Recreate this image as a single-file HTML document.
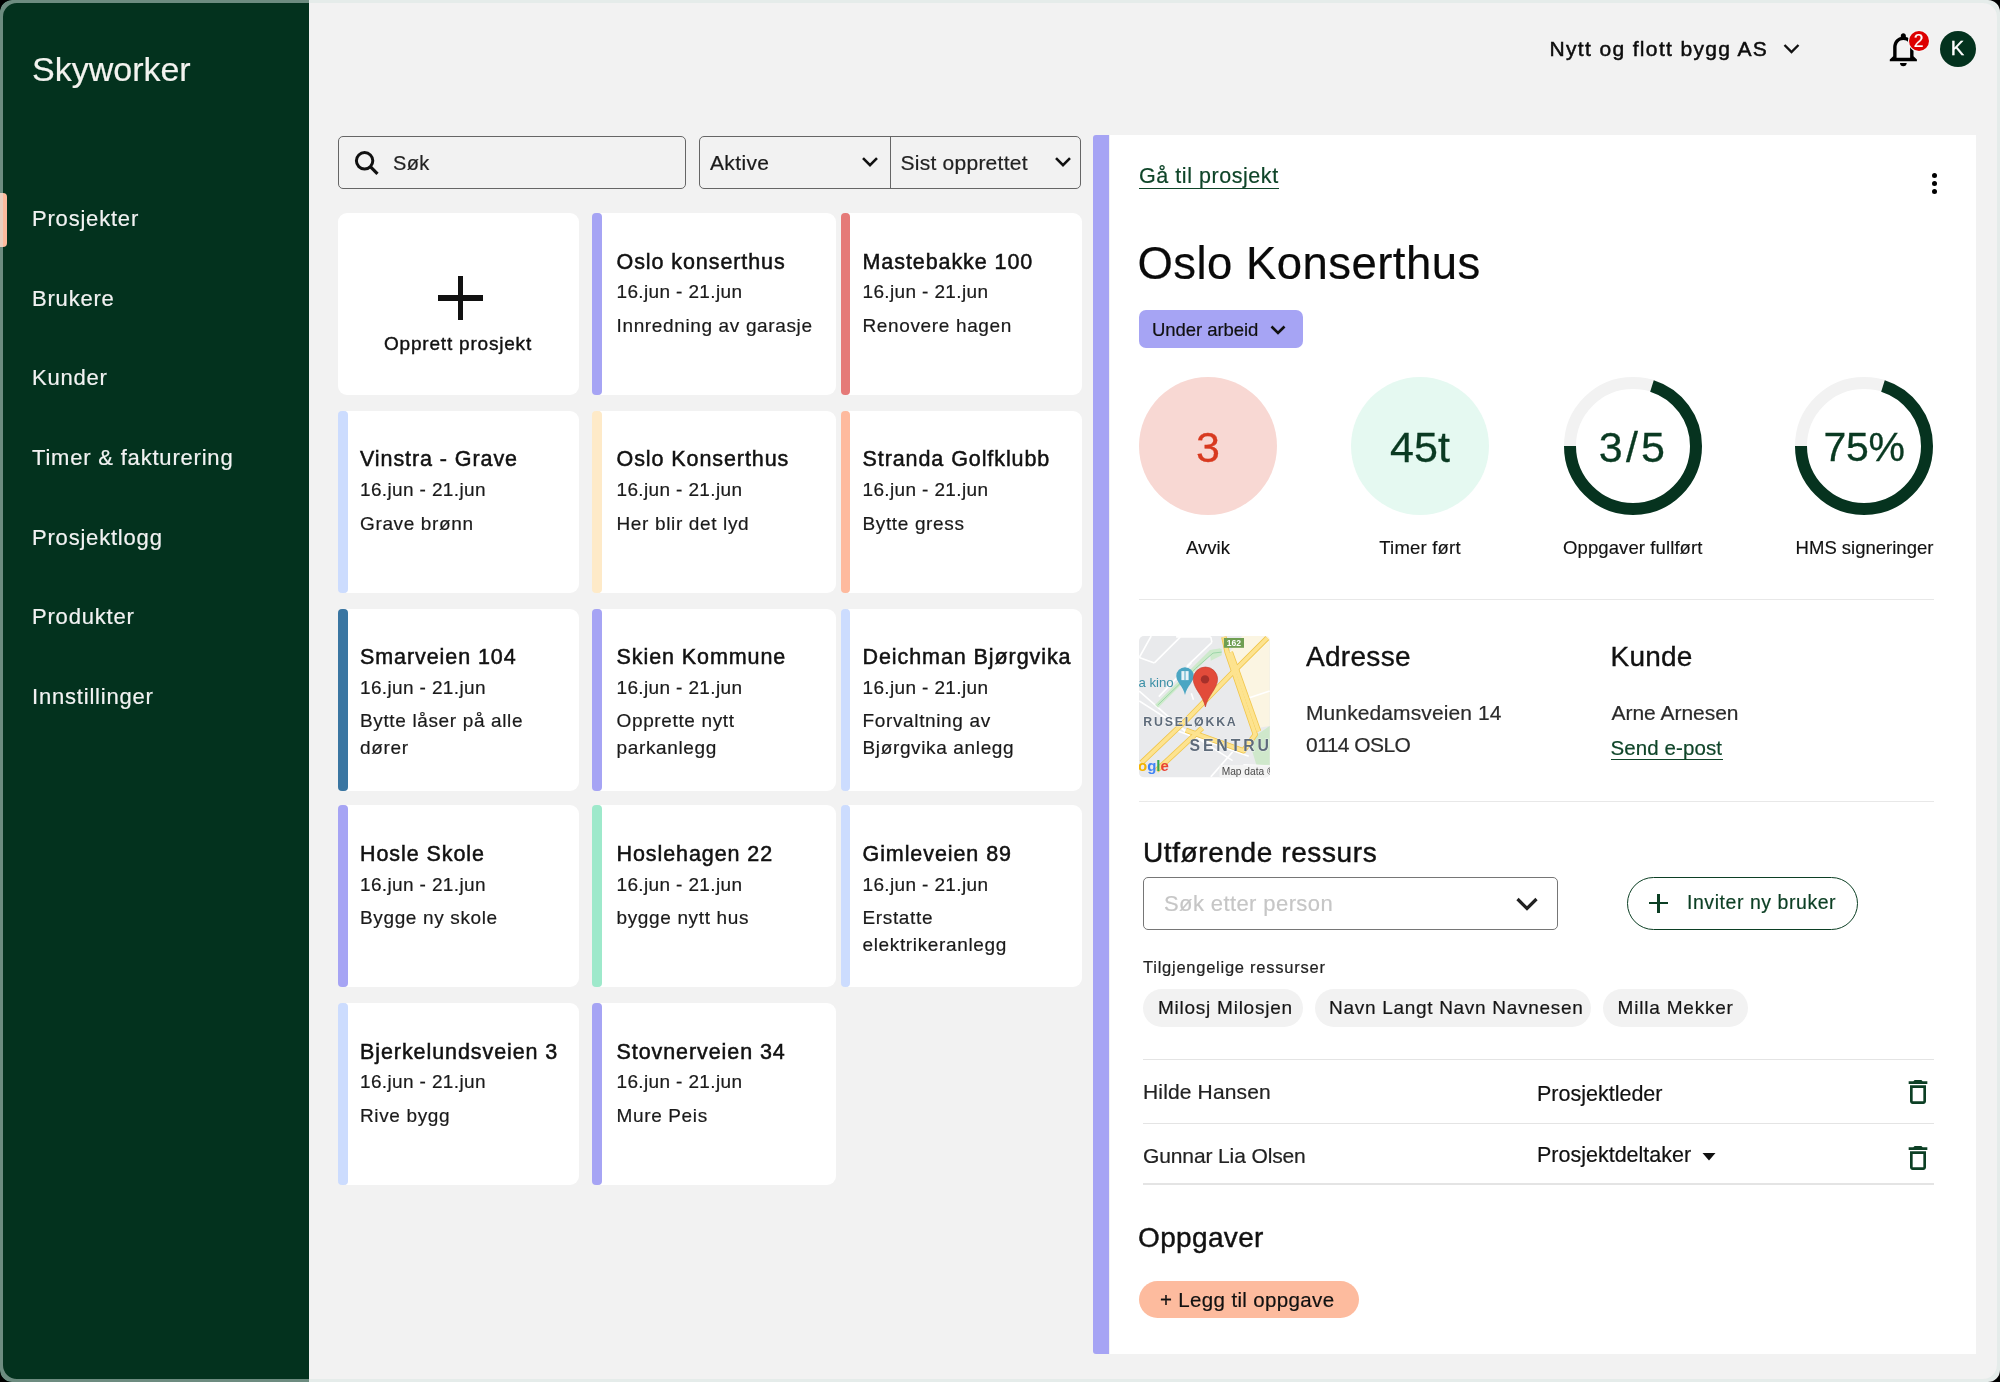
<!DOCTYPE html><html><head><meta charset="utf-8"><style>
*{margin:0;padding:0;box-sizing:border-box}
html,body{width:2000px;height:1382px;overflow:hidden;background:#000}
body{font-family:"Liberation Sans",sans-serif;position:relative}
.t{position:absolute;white-space:nowrap}
.r{position:absolute}
svg{position:absolute;overflow:visible}
#app{position:absolute;left:0;top:0;width:2000px;height:1382px;background:#f2f2f2;overflow:hidden;will-change:transform}
</style></head><body><div id="app">
<div class="r" style="left:0px;top:0px;width:309px;height:1382px;background:#03321e;"></div>
<div class="t " style="left:32.00px;top:48.01px;font-size:34px;line-height:42px;color:#f3f3ef;font-weight:400;letter-spacing:0px;-webkit-text-stroke:0.2px #f3f3ef;">Skyworker</div>
<div class="t " style="left:32.00px;top:205.07px;font-size:22px;line-height:28px;color:#f2f2f2;font-weight:400;letter-spacing:0.8px;-webkit-text-stroke:0.2px #f2f2f2;">Prosjekter</div>
<div class="t " style="left:32.00px;top:284.72px;font-size:22px;line-height:28px;color:#f2f2f2;font-weight:400;letter-spacing:0.8px;-webkit-text-stroke:0.2px #f2f2f2;">Brukere</div>
<div class="t " style="left:32.00px;top:364.37px;font-size:22px;line-height:28px;color:#f2f2f2;font-weight:400;letter-spacing:0.8px;-webkit-text-stroke:0.2px #f2f2f2;">Kunder</div>
<div class="t " style="left:32.00px;top:444.02px;font-size:22px;line-height:28px;color:#f2f2f2;font-weight:400;letter-spacing:0.8px;-webkit-text-stroke:0.2px #f2f2f2;">Timer &amp; fakturering</div>
<div class="t " style="left:32.00px;top:523.67px;font-size:22px;line-height:28px;color:#f2f2f2;font-weight:400;letter-spacing:0.8px;-webkit-text-stroke:0.2px #f2f2f2;">Prosjektlogg</div>
<div class="t " style="left:32.00px;top:603.32px;font-size:22px;line-height:28px;color:#f2f2f2;font-weight:400;letter-spacing:0.8px;-webkit-text-stroke:0.2px #f2f2f2;">Produkter</div>
<div class="t " style="left:32.00px;top:682.97px;font-size:22px;line-height:28px;color:#f2f2f2;font-weight:400;letter-spacing:0.8px;-webkit-text-stroke:0.2px #f2f2f2;">Innstillinger</div>
<div class="r" style="left:0px;top:193px;width:7px;height:54px;background:#fdbb9e;border-radius:0 4px 4px 0;"></div>
<div class="t " style="left:1549.50px;top:36.12px;font-size:21px;line-height:26px;color:#0c0c0c;font-weight:400;letter-spacing:1.35px;-webkit-text-stroke:0.5px #0c0c0c;">Nytt og flott bygg AS</div>
<svg style="left:1780px;top:40px" width="24" height="18" viewBox="0 0 24 18"><polyline points="4.5,5 11.5,12 18.5,5" fill="none" stroke="#111" stroke-width="2.4" stroke-linecap="butt"/></svg>
<svg style="left:1883.2px;top:28.86px" width="40.7" height="40.7" viewBox="0 0 24 24"><path fill="#000" d="M12 22c1.1 0 2-.9 2-2h-4c0 1.1.89 2 2 2zm6-6v-5c0-3.07-1.64-5.64-4.5-6.32V4c0-.83-.67-1.5-1.5-1.5s-1.5.67-1.5 1.5v.68C7.63 5.36 6 7.92 6 11v5l-2 2v1h16v-1l-2-2zm-2 1H8v-6c0-2.48 1.51-4.5 4-4.5s4 2.02 4 4.5v6z"/></svg>
<div class="r" style="left:1908.9px;top:30.7px;width:20px;height:20px;border-radius:50%;background:#dd0000;box-shadow:0 0 0 1px #f4f8f8"></div>
<div class="t " style="left:1913.80px;top:29.83px;font-size:17.5px;line-height:22px;color:#fff;font-weight:400;letter-spacing:0px;-webkit-text-stroke:0.2px #fff;">2</div>
<div class="r" style="left:1939.5px;top:31px;width:36px;height:36px;border-radius:50%;background:#03321e"></div>
<div class="t " style="left:1950.80px;top:35.57px;font-size:20px;line-height:25px;color:#fff;font-weight:400;letter-spacing:0px;-webkit-text-stroke:0.35px #fff;">K</div>
<div class="r" style="left:338.3px;top:136.1px;width:347.9px;height:53px;border:1.8px solid #666;border-radius:5px"></div>
<svg style="left:350px;top:148px" width="32" height="32" viewBox="0 0 32 32"><circle cx="14.6" cy="12.8" r="8.2" fill="none" stroke="#111" stroke-width="3"/><line x1="20.6" y1="18.8" x2="27.5" y2="25.8" stroke="#111" stroke-width="3.2"/></svg>
<div class="t " style="left:393.00px;top:150.87px;font-size:20px;line-height:25px;color:#222;font-weight:400;letter-spacing:0.4px;-webkit-text-stroke:0.2px #222;">Søk</div>
<div class="r" style="left:699.4px;top:135.8px;width:382px;height:52.8px;border:1.8px solid #666;border-radius:5px"></div>
<div class="r" style="left:889.7px;top:136.5px;width:1.7px;height:51.5px;background:#666;"></div>
<svg style="left:858.4px;top:150px" width="24" height="24" viewBox="0 0 24 24"><polyline points="5,8.2 12,15.2 19,8.2" fill="none" stroke="#111" stroke-width="2.6"/></svg>
<svg style="left:1050.6px;top:150px" width="24" height="24" viewBox="0 0 24 24"><polyline points="5,8.2 12,15.2 19,8.2" fill="none" stroke="#111" stroke-width="2.6"/></svg>
<div class="t " style="left:710.00px;top:149.52px;font-size:21px;line-height:26px;color:#1a1a1a;font-weight:400;letter-spacing:0.35px;-webkit-text-stroke:0.2px #1a1a1a;">Aktive</div>
<div class="t " style="left:900.50px;top:149.52px;font-size:21px;line-height:26px;color:#222;font-weight:400;letter-spacing:0.25px;-webkit-text-stroke:0.2px #222;">Sist opprettet</div>
<div class="r" style="left:338.3px;top:213.0px;width:240.7px;height:182px;background:#fff;border-radius:9px"></div>
<div class="r" style="left:438.4px;top:295.2px;width:44.5px;height:5.6px;background:#111;"></div>
<div class="r" style="left:457.9px;top:275.9px;width:5.6px;height:44.2px;background:#111;"></div>
<div class="t " style="left:384.00px;top:332.21px;font-size:19px;line-height:24px;color:#111;font-weight:400;letter-spacing:0.8px;-webkit-text-stroke:0.4px #111;">Opprett prosjekt</div>
<div class="r" style="left:600.2px;top:213.0px;width:235.8px;height:182px;background:#fff;border-radius:0 9px 9px 0"></div>
<div class="r" style="left:592.0px;top:213.0px;width:10.2px;height:182px;background:#a6a4f4;border-radius:4px"></div>
<div class="t " style="left:616.50px;top:248.55px;font-size:21.5px;line-height:27px;color:#111;font-weight:400;letter-spacing:0.92px;-webkit-text-stroke:0.5px #111;">Oslo konserthus</div>
<div class="t " style="left:616.50px;top:280.41px;font-size:19px;line-height:24px;color:#1a1a1a;font-weight:400;letter-spacing:0.36px;-webkit-text-stroke:0.2px #1a1a1a;">16.jun - 21.jun</div>
<div class="t " style="left:616.50px;top:313.71px;font-size:19px;line-height:24px;color:#1a1a1a;font-weight:400;letter-spacing:0.64px;-webkit-text-stroke:0.2px #1a1a1a;">Innredning av garasje</div>
<div class="r" style="left:848.1px;top:213.0px;width:233.5px;height:182px;background:#fff;border-radius:0 9px 9px 0"></div>
<div class="r" style="left:840.9px;top:213.0px;width:9.2px;height:182px;background:#e57a78;border-radius:4px"></div>
<div class="t " style="left:862.50px;top:248.55px;font-size:21.5px;line-height:27px;color:#111;font-weight:400;letter-spacing:0.92px;-webkit-text-stroke:0.5px #111;">Mastebakke 100</div>
<div class="t " style="left:862.50px;top:280.41px;font-size:19px;line-height:24px;color:#1a1a1a;font-weight:400;letter-spacing:0.36px;-webkit-text-stroke:0.2px #1a1a1a;">16.jun - 21.jun</div>
<div class="t " style="left:862.50px;top:313.71px;font-size:19px;line-height:24px;color:#1a1a1a;font-weight:400;letter-spacing:0.64px;-webkit-text-stroke:0.2px #1a1a1a;">Renovere hagen</div>
<div class="r" style="left:346.3px;top:410.9px;width:232.7px;height:182px;background:#fff;border-radius:0 9px 9px 0"></div>
<div class="r" style="left:338.3px;top:410.9px;width:10px;height:182px;background:#ccdcfe;border-radius:4px"></div>
<div class="t " style="left:360.00px;top:446.45px;font-size:21.5px;line-height:27px;color:#111;font-weight:400;letter-spacing:0.92px;-webkit-text-stroke:0.5px #111;">Vinstra - Grave</div>
<div class="t " style="left:360.00px;top:478.31px;font-size:19px;line-height:24px;color:#1a1a1a;font-weight:400;letter-spacing:0.36px;-webkit-text-stroke:0.2px #1a1a1a;">16.jun - 21.jun</div>
<div class="t " style="left:360.00px;top:511.61px;font-size:19px;line-height:24px;color:#1a1a1a;font-weight:400;letter-spacing:0.64px;-webkit-text-stroke:0.2px #1a1a1a;">Grave brønn</div>
<div class="r" style="left:600.2px;top:410.9px;width:235.8px;height:182px;background:#fff;border-radius:0 9px 9px 0"></div>
<div class="r" style="left:592.0px;top:410.9px;width:10.2px;height:182px;background:#feeac8;border-radius:4px"></div>
<div class="t " style="left:616.50px;top:446.45px;font-size:21.5px;line-height:27px;color:#111;font-weight:400;letter-spacing:0.92px;-webkit-text-stroke:0.5px #111;">Oslo Konserthus</div>
<div class="t " style="left:616.50px;top:478.31px;font-size:19px;line-height:24px;color:#1a1a1a;font-weight:400;letter-spacing:0.36px;-webkit-text-stroke:0.2px #1a1a1a;">16.jun - 21.jun</div>
<div class="t " style="left:616.50px;top:511.61px;font-size:19px;line-height:24px;color:#1a1a1a;font-weight:400;letter-spacing:0.64px;-webkit-text-stroke:0.2px #1a1a1a;">Her blir det lyd</div>
<div class="r" style="left:848.1px;top:410.9px;width:233.5px;height:182px;background:#fff;border-radius:0 9px 9px 0"></div>
<div class="r" style="left:840.9px;top:410.9px;width:9.2px;height:182px;background:#feba9e;border-radius:4px"></div>
<div class="t " style="left:862.50px;top:446.45px;font-size:21.5px;line-height:27px;color:#111;font-weight:400;letter-spacing:0.92px;-webkit-text-stroke:0.5px #111;">Stranda Golfklubb</div>
<div class="t " style="left:862.50px;top:478.31px;font-size:19px;line-height:24px;color:#1a1a1a;font-weight:400;letter-spacing:0.36px;-webkit-text-stroke:0.2px #1a1a1a;">16.jun - 21.jun</div>
<div class="t " style="left:862.50px;top:511.61px;font-size:19px;line-height:24px;color:#1a1a1a;font-weight:400;letter-spacing:0.64px;-webkit-text-stroke:0.2px #1a1a1a;">Bytte gress</div>
<div class="r" style="left:346.3px;top:608.5px;width:232.7px;height:182px;background:#fff;border-radius:0 9px 9px 0"></div>
<div class="r" style="left:338.3px;top:608.5px;width:10px;height:182px;background:#3a76a2;border-radius:4px"></div>
<div class="t " style="left:360.00px;top:644.05px;font-size:21.5px;line-height:27px;color:#111;font-weight:400;letter-spacing:0.92px;-webkit-text-stroke:0.5px #111;">Smarveien 104</div>
<div class="t " style="left:360.00px;top:675.91px;font-size:19px;line-height:24px;color:#1a1a1a;font-weight:400;letter-spacing:0.36px;-webkit-text-stroke:0.2px #1a1a1a;">16.jun - 21.jun</div>
<div class="t " style="left:360.00px;top:709.21px;font-size:19px;line-height:24px;color:#1a1a1a;font-weight:400;letter-spacing:0.64px;-webkit-text-stroke:0.2px #1a1a1a;">Bytte låser på alle</div>
<div class="t " style="left:360.00px;top:735.81px;font-size:19px;line-height:24px;color:#1a1a1a;font-weight:400;letter-spacing:0.64px;-webkit-text-stroke:0.2px #1a1a1a;">dører</div>
<div class="r" style="left:600.2px;top:608.5px;width:235.8px;height:182px;background:#fff;border-radius:0 9px 9px 0"></div>
<div class="r" style="left:592.0px;top:608.5px;width:10.2px;height:182px;background:#a6a4f4;border-radius:4px"></div>
<div class="t " style="left:616.50px;top:644.05px;font-size:21.5px;line-height:27px;color:#111;font-weight:400;letter-spacing:0.92px;-webkit-text-stroke:0.5px #111;">Skien Kommune</div>
<div class="t " style="left:616.50px;top:675.91px;font-size:19px;line-height:24px;color:#1a1a1a;font-weight:400;letter-spacing:0.36px;-webkit-text-stroke:0.2px #1a1a1a;">16.jun - 21.jun</div>
<div class="t " style="left:616.50px;top:709.21px;font-size:19px;line-height:24px;color:#1a1a1a;font-weight:400;letter-spacing:0.64px;-webkit-text-stroke:0.2px #1a1a1a;">Opprette nytt</div>
<div class="t " style="left:616.50px;top:735.81px;font-size:19px;line-height:24px;color:#1a1a1a;font-weight:400;letter-spacing:0.64px;-webkit-text-stroke:0.2px #1a1a1a;">parkanlegg</div>
<div class="r" style="left:848.1px;top:608.5px;width:233.5px;height:182px;background:#fff;border-radius:0 9px 9px 0"></div>
<div class="r" style="left:840.9px;top:608.5px;width:9.2px;height:182px;background:#ccdcfe;border-radius:4px"></div>
<div class="t " style="left:862.50px;top:644.05px;font-size:21.5px;line-height:27px;color:#111;font-weight:400;letter-spacing:0.92px;-webkit-text-stroke:0.5px #111;">Deichman Bjørgvika</div>
<div class="t " style="left:862.50px;top:675.91px;font-size:19px;line-height:24px;color:#1a1a1a;font-weight:400;letter-spacing:0.36px;-webkit-text-stroke:0.2px #1a1a1a;">16.jun - 21.jun</div>
<div class="t " style="left:862.50px;top:709.21px;font-size:19px;line-height:24px;color:#1a1a1a;font-weight:400;letter-spacing:0.64px;-webkit-text-stroke:0.2px #1a1a1a;">Forvaltning av</div>
<div class="t " style="left:862.50px;top:735.81px;font-size:19px;line-height:24px;color:#1a1a1a;font-weight:400;letter-spacing:0.64px;-webkit-text-stroke:0.2px #1a1a1a;">Bjørgvika anlegg</div>
<div class="r" style="left:346.3px;top:805.2px;width:232.7px;height:182px;background:#fff;border-radius:0 9px 9px 0"></div>
<div class="r" style="left:338.3px;top:805.2px;width:10px;height:182px;background:#a6a4f4;border-radius:4px"></div>
<div class="t " style="left:360.00px;top:840.75px;font-size:21.5px;line-height:27px;color:#111;font-weight:400;letter-spacing:0.92px;-webkit-text-stroke:0.5px #111;">Hosle Skole</div>
<div class="t " style="left:360.00px;top:872.61px;font-size:19px;line-height:24px;color:#1a1a1a;font-weight:400;letter-spacing:0.36px;-webkit-text-stroke:0.2px #1a1a1a;">16.jun - 21.jun</div>
<div class="t " style="left:360.00px;top:905.91px;font-size:19px;line-height:24px;color:#1a1a1a;font-weight:400;letter-spacing:0.64px;-webkit-text-stroke:0.2px #1a1a1a;">Bygge ny skole</div>
<div class="r" style="left:600.2px;top:805.2px;width:235.8px;height:182px;background:#fff;border-radius:0 9px 9px 0"></div>
<div class="r" style="left:592.0px;top:805.2px;width:10.2px;height:182px;background:#9ee9cb;border-radius:4px"></div>
<div class="t " style="left:616.50px;top:840.75px;font-size:21.5px;line-height:27px;color:#111;font-weight:400;letter-spacing:0.92px;-webkit-text-stroke:0.5px #111;">Hoslehagen 22</div>
<div class="t " style="left:616.50px;top:872.61px;font-size:19px;line-height:24px;color:#1a1a1a;font-weight:400;letter-spacing:0.36px;-webkit-text-stroke:0.2px #1a1a1a;">16.jun - 21.jun</div>
<div class="t " style="left:616.50px;top:905.91px;font-size:19px;line-height:24px;color:#1a1a1a;font-weight:400;letter-spacing:0.64px;-webkit-text-stroke:0.2px #1a1a1a;">bygge nytt hus</div>
<div class="r" style="left:848.1px;top:805.2px;width:233.5px;height:182px;background:#fff;border-radius:0 9px 9px 0"></div>
<div class="r" style="left:840.9px;top:805.2px;width:9.2px;height:182px;background:#ccdcfe;border-radius:4px"></div>
<div class="t " style="left:862.50px;top:840.75px;font-size:21.5px;line-height:27px;color:#111;font-weight:400;letter-spacing:0.92px;-webkit-text-stroke:0.5px #111;">Gimleveien 89</div>
<div class="t " style="left:862.50px;top:872.61px;font-size:19px;line-height:24px;color:#1a1a1a;font-weight:400;letter-spacing:0.36px;-webkit-text-stroke:0.2px #1a1a1a;">16.jun - 21.jun</div>
<div class="t " style="left:862.50px;top:905.91px;font-size:19px;line-height:24px;color:#1a1a1a;font-weight:400;letter-spacing:0.64px;-webkit-text-stroke:0.2px #1a1a1a;">Erstatte</div>
<div class="t " style="left:862.50px;top:932.51px;font-size:19px;line-height:24px;color:#1a1a1a;font-weight:400;letter-spacing:0.64px;-webkit-text-stroke:0.2px #1a1a1a;">elektrikeranlegg</div>
<div class="r" style="left:346.3px;top:1003.0px;width:232.7px;height:182px;background:#fff;border-radius:0 9px 9px 0"></div>
<div class="r" style="left:338.3px;top:1003.0px;width:10px;height:182px;background:#ccdcfe;border-radius:4px"></div>
<div class="t " style="left:360.00px;top:1038.55px;font-size:21.5px;line-height:27px;color:#111;font-weight:400;letter-spacing:0.92px;-webkit-text-stroke:0.5px #111;">Bjerkelundsveien 3</div>
<div class="t " style="left:360.00px;top:1070.41px;font-size:19px;line-height:24px;color:#1a1a1a;font-weight:400;letter-spacing:0.36px;-webkit-text-stroke:0.2px #1a1a1a;">16.jun - 21.jun</div>
<div class="t " style="left:360.00px;top:1103.71px;font-size:19px;line-height:24px;color:#1a1a1a;font-weight:400;letter-spacing:0.64px;-webkit-text-stroke:0.2px #1a1a1a;">Rive bygg</div>
<div class="r" style="left:600.2px;top:1003.0px;width:235.8px;height:182px;background:#fff;border-radius:0 9px 9px 0"></div>
<div class="r" style="left:592.0px;top:1003.0px;width:10.2px;height:182px;background:#a6a4f4;border-radius:4px"></div>
<div class="t " style="left:616.50px;top:1038.55px;font-size:21.5px;line-height:27px;color:#111;font-weight:400;letter-spacing:0.92px;-webkit-text-stroke:0.5px #111;">Stovnerveien 34</div>
<div class="t " style="left:616.50px;top:1070.41px;font-size:19px;line-height:24px;color:#1a1a1a;font-weight:400;letter-spacing:0.36px;-webkit-text-stroke:0.2px #1a1a1a;">16.jun - 21.jun</div>
<div class="t " style="left:616.50px;top:1103.71px;font-size:19px;line-height:24px;color:#1a1a1a;font-weight:400;letter-spacing:0.64px;-webkit-text-stroke:0.2px #1a1a1a;">Mure Peis</div>
<div class="r" style="left:1109.5px;top:135px;width:866.3px;height:1218.6px;background:#fff;"></div>
<div class="r" style="left:1093.4px;top:135px;width:16.1px;height:1218.6px;background:#a6a4f4;border-radius:3px 0 0 3px;"></div>
<div class="t " style="left:1139.00px;top:162.65px;font-size:21.5px;line-height:27px;color:#0f4529;font-weight:400;letter-spacing:0.55px;-webkit-text-stroke:0.2px #0f4529;">Gå til prosjekt</div>
<div class="r" style="left:1139px;top:187.5px;width:139.5px;height:1.4px;background:#0f4529;"></div>
<div class="r" style="left:1931.6px;top:172.60000000000002px;width:5.4px;height:5.4px;border-radius:50%;background:#000"></div>
<div class="r" style="left:1931.6px;top:180.70000000000002px;width:5.4px;height:5.4px;border-radius:50%;background:#000"></div>
<div class="r" style="left:1931.6px;top:188.70000000000002px;width:5.4px;height:5.4px;border-radius:50%;background:#000"></div>
<div class="t " style="left:1137.50px;top:235.33px;font-size:45.5px;line-height:57px;color:#0a0a0a;font-weight:400;letter-spacing:0.45px;-webkit-text-stroke:0.2px #0a0a0a;">Oslo Konserthus</div>
<div class="r" style="left:1139px;top:310.3px;width:164px;height:37.6px;border-radius:7px;background:#a6a4f4"></div>
<div class="t " style="left:1152.00px;top:317.59px;font-size:18.5px;line-height:23px;color:#111;font-weight:400;letter-spacing:-0.05px;-webkit-text-stroke:0.2px #111;">Under arbeid</div>
<svg style="left:1264px;top:317px" width="28" height="24" viewBox="0 0 28 24"><polyline points="7.5,9.5 14,16 20.5,9.5" fill="none" stroke="#111" stroke-width="2.6"/></svg>
<div class="r" style="left:1138.8px;top:377.0px;width:138px;height:138px;border-radius:50%;background:#f8d8d3"></div>
<div class="r" style="left:1350.8px;top:377.0px;width:138px;height:138px;border-radius:50%;background:#e5f9f1"></div>
<svg style="left:1562.8px;top:376px" width="140" height="140" viewBox="0 0 140 140"><circle cx="70" cy="70" r="63" fill="none" stroke="#f2f2f2" stroke-width="12"/><circle cx="70" cy="70" r="63" fill="none" stroke="#06331f" stroke-width="12" stroke-dasharray="277.09 395.84" transform="rotate(180 70 70) scale(1,-1) translate(0,-140)"/></svg>
<svg style="left:1793.9px;top:376px" width="140" height="140" viewBox="0 0 140 140"><circle cx="70" cy="70" r="63" fill="none" stroke="#f2f2f2" stroke-width="12"/><circle cx="70" cy="70" r="63" fill="none" stroke="#06331f" stroke-width="12" stroke-dasharray="277.09 395.84" transform="rotate(180 70 70) scale(1,-1) translate(0,-140)"/></svg>
<div class="t" style="left:1008px;width:400px;text-align:center;top:419.69px;font-size:43px;line-height:54px;color:#d8391f;letter-spacing:0px;font-weight:400;-webkit-text-stroke:0.3px #d8391f;">3</div>
<div class="t" style="left:1220px;width:400px;text-align:center;top:419.69px;font-size:43px;line-height:54px;color:#0a3a22;letter-spacing:0px;font-weight:400;-webkit-text-stroke:0.3px #0a3a22;">45t</div>
<div class="t" style="left:1433.5px;width:400px;text-align:center;top:419.69px;font-size:43px;line-height:54px;color:#0a3a22;letter-spacing:3.2px;font-weight:400;-webkit-text-stroke:0.3px #0a3a22;">3/5</div>
<div class="t" style="left:1664px;width:400px;text-align:center;top:421.89px;font-size:41px;line-height:51px;color:#0a3a22;letter-spacing:-0.3px;font-weight:400;-webkit-text-stroke:0.3px #0a3a22;">75%</div>
<div class="t" style="left:1008px;width:400px;text-align:center;top:535.69px;font-size:18.5px;line-height:23px;color:#111;letter-spacing:0px;font-weight:400;-webkit-text-stroke:0.15px #111;">Avvik</div>
<div class="t" style="left:1220px;width:400px;text-align:center;top:535.69px;font-size:18.5px;line-height:23px;color:#111;letter-spacing:0.2px;font-weight:400;-webkit-text-stroke:0.15px #111;">Timer ført</div>
<div class="t" style="left:1432.8px;width:400px;text-align:center;top:535.69px;font-size:18.5px;line-height:23px;color:#111;letter-spacing:0.1px;font-weight:400;-webkit-text-stroke:0.15px #111;">Oppgaver fullført</div>
<div class="t" style="left:1664.5px;width:400px;text-align:center;top:535.69px;font-size:18.5px;line-height:23px;color:#111;letter-spacing:0px;font-weight:400;-webkit-text-stroke:0.15px #111;">HMS signeringer</div>
<div class="r" style="left:1139px;top:598.6px;width:795px;height:1.6px;background:#e8e8e8;"></div>
<div class="t " style="left:1306.00px;top:638.79px;font-size:28px;line-height:35px;color:#111;font-weight:400;letter-spacing:0.3px;-webkit-text-stroke:0.35px #111;">Adresse</div>
<div class="t " style="left:1306.00px;top:700.12px;font-size:21px;line-height:26px;color:#2b2b2b;font-weight:400;letter-spacing:0.1px;-webkit-text-stroke:0.2px #2b2b2b;">Munkedamsveien 14</div>
<div class="t " style="left:1306.00px;top:732.32px;font-size:21px;line-height:26px;color:#2b2b2b;font-weight:400;letter-spacing:-0.55px;-webkit-text-stroke:0.2px #2b2b2b;">0114 OSLO</div>
<div class="t " style="left:1610.50px;top:638.79px;font-size:28px;line-height:35px;color:#111;font-weight:400;letter-spacing:0.2px;-webkit-text-stroke:0.35px #111;">Kunde</div>
<div class="t " style="left:1611.50px;top:700.42px;font-size:21px;line-height:26px;color:#2b2b2b;font-weight:400;letter-spacing:-0.02px;-webkit-text-stroke:0.2px #2b2b2b;">Arne Arnesen</div>
<div class="t " style="left:1610.50px;top:734.79px;font-size:20.5px;line-height:26px;color:#0f4529;font-weight:400;letter-spacing:0.1px;-webkit-text-stroke:0.2px #0f4529;">Send e-post</div>
<div class="r" style="left:1611px;top:758.8px;width:112px;height:1.4px;background:#0f4529;"></div>
<div class="r" style="left:1139px;top:800.6px;width:795px;height:1.6px;background:#e8e8e8;"></div>
<svg style="left:1139px;top:635.6px" width="131" height="141.5" viewBox="0 0 131 141.5"><defs><clipPath id="mc"><rect x="0" y="0" width="131" height="141.5" rx="5"/></clipPath></defs><g clip-path="url(#mc)"><rect x="0" y="0" width="131" height="141.5" fill="#e9eaec"/><polygon points="103.3,0.0 130.7,0.0 130.7,89.9 118.5,92.0 90.3,16.1" fill="#fbf5e2"/><polygon points="109.8,104.0 130.7,89.9 130.7,131.1 117.4,128.9" fill="#cfe8cb"/><polyline points="12.2,0.0 0.2,21.5" fill="none" stroke="#ffffff" stroke-width="1.6"/><polyline points="0.2,21.5 15.4,26.9" fill="none" stroke="#ffffff" stroke-width="1.6"/><polyline points="15.4,26.9 41.5,0.9" fill="none" stroke="#ffffff" stroke-width="1.6"/><polyline points="37.1,0.9 71.8,0.9" fill="none" stroke="#ffffff" stroke-width="1.6"/><polyline points="71.8,0.9 72.9,6.3" fill="none" stroke="#ffffff" stroke-width="1.6"/><polyline points="72.9,6.3 48.0,30.2" fill="none" stroke="#ffffff" stroke-width="1.6"/><polyline points="0.2,55.1 61.0,108.3" fill="none" stroke="#ffffff" stroke-width="1.6"/><polyline points="0.2,64.9 93.6,124.6" fill="none" stroke="#ffffff" stroke-width="1.6"/><polyline points="19.8,60.6 52.3,26.9" fill="none" stroke="#ffffff" stroke-width="1.6"/><polyline points="52.3,57.3 54.5,63.8" fill="none" stroke="#ffffff" stroke-width="1.6"/><polyline points="104.4,63.8 130.7,55.1" fill="none" stroke="#ffffff" stroke-width="1.6"/><polyline points="71.8,140.9 93.6,115.9" fill="none" stroke="#ffffff" stroke-width="1.6"/><polyline points="104.4,128.9 130.7,130.0" fill="none" stroke="#ffffff" stroke-width="1.6"/><polyline points="39.3,95.3 109.8,120.3" fill="none" stroke="#ffffff" stroke-width="1.6"/><polyline points="17.6,70.3 56.7,31.3 71.8,16.1 81.6,14.4" fill="none" stroke="#cdeacb" stroke-width="4.2"/><polygon points="70.8,13.9 82.7,12.8 82.7,19.3 71.8,24.7" fill="#cdeacb"/><polyline points="18.7,69.2 56.7,32.3 74.0,17.1 82.7,16.1" fill="none" stroke="#8fd19e" stroke-width="0.8"/><polyline points="2.4,126.8 48.0,83.4 90.3,39.9 128.3,2.0" fill="none" stroke="#f1c64b" stroke-width="5.4" stroke-linejoin="round"/><polyline points="17.6,134.4 63.2,92.0" fill="none" stroke="#f1c64b" stroke-width="5.4" stroke-linejoin="round"/><polyline points="46.9,94.2 104.4,114.8 116.3,98.5 88.1,16.1 84.9,0.9" fill="none" stroke="#f1c64b" stroke-width="5.4" stroke-linejoin="round"/><polyline points="91.4,16.1 119.6,95.3" fill="none" stroke="#f1c64b" stroke-width="5.4" stroke-linejoin="round"/><polyline points="2.4,126.8 48.0,83.4 90.3,39.9 128.3,2.0" fill="none" stroke="#fde38f" stroke-width="3.8" stroke-linejoin="round"/><polyline points="17.6,134.4 63.2,92.0" fill="none" stroke="#fde38f" stroke-width="3.8" stroke-linejoin="round"/><polyline points="46.9,94.2 104.4,114.8 116.3,98.5 88.1,16.1 84.9,0.9" fill="none" stroke="#fde38f" stroke-width="3.8" stroke-linejoin="round"/><polyline points="91.4,16.1 119.6,95.3" fill="none" stroke="#fde38f" stroke-width="3.8" stroke-linejoin="round"/><text x="-0.5" y="50.5" font-family="Liberation Sans" font-size="13.2" fill="#3a8fa6">a kino</text><text x="4.3" y="90.4" font-family="Liberation Sans" font-weight="bold" font-size="12.4" letter-spacing="1.75" fill="#5e6b7a" stroke="#ffffff" stroke-width="0.6" paint-order="stroke">RUSELØKKA</text><text x="50.5" y="114.8" font-family="Liberation Sans" font-weight="bold" font-size="15.8" letter-spacing="2.9" fill="#5e6b7a" stroke="#ffffff" stroke-width="0.6" paint-order="stroke">SENTRUM</text><rect x="84.9" y="2.0" width="20.1" height="9.8" fill="#6f9e52"/><text x="94.9" y="9.5" text-anchor="middle" font-family="Liberation Sans" font-weight="bold" font-size="8.6" fill="#fff">162</text><path d="M37.3,39.9 A8.7,8.7 0 1 1 54.7,39.9 C54.7,45.9 48.0,49.9 46.0,58.9 C44.0,49.9 37.3,45.9 37.3,39.9z" fill="#4ba6c3"/><rect x="42.4" y="35.1" width="7.2" height="9" fill="#e8f4f8"/><line x1="46.0" y1="35.1" x2="46.0" y2="44.1" stroke="#4ba6c3" stroke-width="1"/><path d="M54.2,43.2 A12.2,12.2 0 1 1 78.6,43.2 C78.6,52.2 68.4,60.2 66.4,70.9 C64.4,60.2 54.2,52.2 54.2,43.2z" fill="#e24b3a" stroke="#c23a2c" stroke-width="0.6"/><circle cx="66.0" cy="43.4" r="4.2" fill="#a5302a"/><text x="-1" y="134.5" font-family="Liberation Sans" font-weight="bold" font-size="15"><tspan fill="#f4b400">o</tspan><tspan fill="#4285f4">g</tspan><tspan fill="#34a853">l</tspan><tspan fill="#ea4335">e</tspan></text><rect x="80.5" y="128.9" width="60" height="20" fill="#f5f5f5" fill-opacity="0.85"/><text x="82.7" y="138.5" font-family="Liberation Sans" font-size="10.2" fill="#4a4a4a">Map data ©</text></g></svg>
<div class="t " style="left:1143.00px;top:834.99px;font-size:28px;line-height:35px;color:#111;font-weight:400;letter-spacing:0.6px;-webkit-text-stroke:0.45px #111;">Utførende ressurs</div>
<div class="r" style="left:1143.3px;top:877.4px;width:414.7px;height:52.4px;border:1.8px solid #767676;border-radius:5px"></div>
<div class="t " style="left:1164.00px;top:890.37px;font-size:22px;line-height:28px;color:#c6c6c6;font-weight:400;letter-spacing:0.4px;-webkit-text-stroke:0.2px #c6c6c6;">Søk etter person</div>
<svg style="left:1510px;top:887px" width="34" height="34" viewBox="0 0 34 34"><polyline points="7.5,12 17,21.5 26.5,12" fill="none" stroke="#222" stroke-width="3.2"/></svg>
<div class="r" style="left:1627px;top:877px;width:231px;height:52.7px;border:1.8px solid #0c3f24;border-radius:27px"></div>
<div class="r" style="left:1649px;top:902.1px;width:19px;height:2.4px;background:#0c3f24;"></div>
<div class="r" style="left:1657.3px;top:893.8px;width:2.4px;height:19px;background:#0c3f24;"></div>
<div class="t " style="left:1687.00px;top:889.64px;font-size:19.5px;line-height:24px;color:#0c3f24;font-weight:400;letter-spacing:0.55px;-webkit-text-stroke:0.2px #0c3f24;">Inviter ny bruker</div>
<div class="t " style="left:1143.00px;top:957.18px;font-size:16.5px;line-height:21px;color:#222;font-weight:400;letter-spacing:0.75px;-webkit-text-stroke:0.2px #222;">Tilgjengelige ressurser</div>
<div class="r" style="left:1143px;top:989.4px;width:159.6px;height:37.4px;border-radius:19px;background:#f2f2f2"></div>
<div class="t " style="left:1158.00px;top:996.11px;font-size:19px;line-height:24px;color:#151515;font-weight:400;letter-spacing:0.75px;-webkit-text-stroke:0.2px #151515;">Milosj Milosjen</div>
<div class="r" style="left:1314.7px;top:989.4px;width:276.0px;height:37.4px;border-radius:19px;background:#f2f2f2"></div>
<div class="t " style="left:1329.00px;top:996.11px;font-size:19px;line-height:24px;color:#151515;font-weight:400;letter-spacing:0.7px;-webkit-text-stroke:0.2px #151515;">Navn Langt Navn Navnesen</div>
<div class="r" style="left:1602.7px;top:989.4px;width:145.3px;height:37.4px;border-radius:19px;background:#f2f2f2"></div>
<div class="t " style="left:1617.50px;top:996.11px;font-size:19px;line-height:24px;color:#151515;font-weight:400;letter-spacing:0.8px;-webkit-text-stroke:0.2px #151515;">Milla Mekker</div>
<div class="r" style="left:1143px;top:1058.8px;width:791px;height:1.4px;background:#e4e4e4;"></div>
<div class="r" style="left:1143px;top:1123.0px;width:791px;height:1.4px;background:#e4e4e4;"></div>
<div class="r" style="left:1143px;top:1183.4px;width:791px;height:1.4px;background:#e4e4e4;"></div>
<div class="t " style="left:1143.00px;top:1078.72px;font-size:21px;line-height:26px;color:#222;font-weight:400;letter-spacing:0.15px;-webkit-text-stroke:0.2px #222;">Hilde Hansen</div>
<div class="t " style="left:1143.00px;top:1142.92px;font-size:21px;line-height:26px;color:#222;font-weight:400;letter-spacing:-0.12px;-webkit-text-stroke:0.2px #222;">Gunnar Lia Olsen</div>
<div class="t " style="left:1537.00px;top:1081.05px;font-size:21.5px;line-height:27px;color:#111;font-weight:400;letter-spacing:0px;-webkit-text-stroke:0.2px #111;">Prosjektleder</div>
<div class="t " style="left:1537.00px;top:1142.05px;font-size:21.5px;line-height:27px;color:#111;font-weight:400;letter-spacing:0px;-webkit-text-stroke:0.2px #111;">Prosjektdeltaker</div>
<svg style="left:1699.5px;top:1140px" width="18" height="24" viewBox="0 0 18 24"><path d="M2.5 13h13l-6.5 7.5z" fill="#111"/></svg>
<svg style="left:1902.2px;top:1076px" width="32" height="32" viewBox="0 0 24 24"><path fill="#0c3f24" d="M6 19c0 1.1.9 2 2 2h8c1.1 0 2-.9 2-2V7H6v12zM8 9h8v10H8V9zm7.5-5l-1-1h-5l-1 1H5v2h14V4z"/></svg>
<svg style="left:1902.2px;top:1141.8px" width="32" height="32" viewBox="0 0 24 24"><path fill="#0c3f24" d="M6 19c0 1.1.9 2 2 2h8c1.1 0 2-.9 2-2V7H6v12zM8 9h8v10H8V9zm7.5-5l-1-1h-5l-1 1H5v2h14V4z"/></svg>
<div class="t " style="left:1138.00px;top:1220.29px;font-size:28px;line-height:35px;color:#111;font-weight:400;letter-spacing:0.35px;-webkit-text-stroke:0.4px #111;">Oppgaver</div>
<div class="r" style="left:1139px;top:1281px;width:220px;height:37px;border-radius:19px;background:#fdbb9e"></div>
<div class="t " style="left:1160.00px;top:1286.69px;font-size:20.5px;line-height:26px;color:#111;font-weight:400;letter-spacing:0.35px;-webkit-text-stroke:0.2px #111;">+ Legg til oppgave</div>
<svg style="left:0;top:0" width="2000" height="1382" viewBox="0 0 2000 1382"><path fill-rule="evenodd" fill="rgba(215,230,226,0.5)" d="M12,0H1988A12,12 0 0 1 2000,12V1370A12,12 0 0 1 1988,1382H12A12,12 0 0 1 0,1370V12A12,12 0 0 1 12,0Z M17,3H1983A14,14 0 0 1 1997,17V1365A14,14 0 0 1 1983,1379H17A14,14 0 0 1 3,1365V17A14,14 0 0 1 17,3Z"/><path fill-rule="evenodd" fill="#000" d="M0,0H2000V1382H0Z M12,0H1988A12,12 0 0 1 2000,12V1370A12,12 0 0 1 1988,1382H12A12,12 0 0 1 0,1370V12A12,12 0 0 1 12,0Z"/></svg>
</div></body></html>
